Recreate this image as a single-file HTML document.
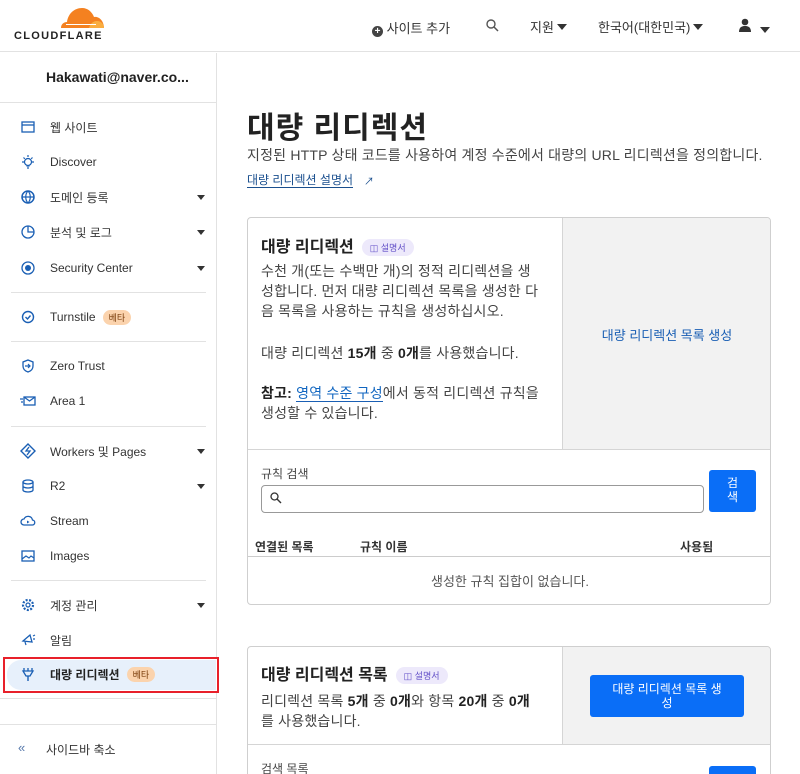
<!DOCTYPE html>
<html><head><meta charset="utf-8"><style>
*{margin:0;padding:0;box-sizing:border-box}
html,body{width:800px;height:774px;overflow:hidden}
body{background:#fff;font-family:"Liberation Sans","Noto Sans CJK KR",sans-serif;color:#222;position:relative}
.a{position:absolute;white-space:nowrap}
.hd{position:absolute;left:0;top:0;width:800px;height:52px;border-bottom:1px solid #e2e2e2}
.sb{position:absolute;left:0;top:53px;width:217px;height:721px;border-right:1px solid #e2e2e2}
.it{position:absolute;left:20px;font-size:12px;color:#333;display:flex;align-items:center;height:20px}
.it svg{width:16px;height:16px;margin-right:14px;flex:none}
.car{position:absolute;left:197px;width:0;height:0;border-left:4px solid transparent;border-right:4px solid transparent;border-top:5px solid #333}
.hc{display:inline-block;width:0;height:0;border-left:5px solid transparent;border-right:5px solid transparent;border-top:6px solid #333;vertical-align:2px;margin-left:3px}
.dv{position:absolute;left:11px;width:195px;height:1px;background:#e2e2e2}
.beta{display:inline-block;background:#fbd3ad;color:#7a3d0b;font-size:9px;border-radius:8px;padding:1px 6px;margin-left:7px}
.card{position:absolute;left:247px;width:524px;border:1px solid #cfcfcf;border-radius:4px;overflow:hidden}
.gray{position:absolute;background:#f2f2f2;border-left:1px solid #d5d5d5}
.doc{display:inline-block;background:#ede9fb;color:#6350c8;font-size:9px;border-radius:9px;padding:2px 8px;margin-left:8px;vertical-align:middle;font-weight:normal}
.p{font-size:14px;color:#444;line-height:20px;letter-spacing:0.2px}
a{color:#1166c0;text-decoration:none}
</style></head><body>
<div class="hd">
<svg class="a" style="left:57px;top:5px" width="48" height="24" viewBox="0 0 48 24"><path d="M4 23c0-4 3-6 6-6 1-8 7-14 15-14 6 0 10 4 12 9 5-1 10 4 10 11z" fill="#f48120"/><path d="M32 23c1-4 4-7 8-7 4 0 7 3 7 7z" fill="#faad3f"/><path d="M9 19.5h30" stroke="#fff" stroke-width="1"/></svg>
<div class="a" style="left:14px;top:30px;font-size:11px;font-weight:bold;letter-spacing:1.3px;color:#222">CLOUDFLARE</div>
<div class="a" style="left:372px;top:18px;font-size:13px;color:#333"><span style="display:inline-block;width:11px;height:11px;border-radius:50%;background:#444;color:#fff;font-size:10px;line-height:11px;text-align:center;vertical-align:-1px;font-weight:bold">+</span> 사이트 추가</div>
<svg class="a" style="left:486px;top:19px" width="13" height="13" viewBox="0 0 13 13"><circle cx="5" cy="5" r="4" fill="none" stroke="#555" stroke-width="1.4"/><path d="M8 8l4 4" stroke="#555" stroke-width="1.5"/></svg>
<div class="a" style="left:530px;top:17px;font-size:13px;color:#333">지원<span class="hc"></span></div>
<div class="a" style="left:598px;top:17px;font-size:13px;color:#333">한국어(대한민국)<span class="hc"></span></div>
<svg class="a" style="left:738px;top:18px" width="14" height="14" viewBox="0 0 14 14"><circle cx="7" cy="4" r="3.3" fill="#333"/><path d="M1 14c0-5 3-6 6-6s6 1 6 6z" fill="#333"/></svg>
<div class="a" style="left:760px;top:22px"><span class="hc" style="margin:0"></span></div>
</div>
<div class="sb">
<div class="a" style="left:46px;top:16px;font-size:14px;font-weight:bold;color:#222">Hakawati@naver.co...</div>
<div class="a" style="left:0;top:49px;width:216px;height:1px;background:#e2e2e2"></div>
</div>
<div class="it" style="top:117px"><svg viewBox="0 0 16 16"><rect x="2" y="3" width="12" height="10" fill="none" stroke="#1a5fb4" stroke-width="1.3"/><path d="M2 6h12" stroke="#1a5fb4" stroke-width="1.3"/></svg>웹 사이트</div>
<div class="it" style="top:152px"><svg viewBox="0 0 16 16"><circle cx="8" cy="8" r="3.5" fill="none" stroke="#1a5fb4" stroke-width="1.2"/><path d="M8 1v2M2 8h2M12 8h2M3.5 3.5l1.3 1.3M12.5 3.5l-1.3 1.3M6.5 12h3M7 14h2" stroke="#1a5fb4" stroke-width="1.2"/></svg>Discover</div>
<div class="it" style="top:187px"><svg viewBox="0 0 16 16"><circle cx="8" cy="8" r="6" fill="none" stroke="#1a5fb4" stroke-width="1.5"/><path d="M2 8h12M8 2c-3 3-3 9 0 12M8 2c3 3 3 9 0 12" stroke="#1a5fb4" stroke-width="1.2" fill="none"/></svg>도메인 등록</div><div class="car" style="top:195px"></div>
<div class="it" style="top:222px"><svg viewBox="0 0 16 16"><circle cx="8" cy="8" r="6" fill="none" stroke="#1a5fb4" stroke-width="1.3"/><path d="M8 2v6h6" fill="none" stroke="#1a5fb4" stroke-width="1.3"/></svg>분석 및 로그</div><div class="car" style="top:230px"></div>
<div class="it" style="top:258px"><svg viewBox="0 0 16 16"><circle cx="8" cy="8" r="6" fill="none" stroke="#1a5fb4" stroke-width="1.3"/><circle cx="8" cy="8" r="3" fill="#1a5fb4"/></svg>Security Center</div><div class="car" style="top:266px"></div>
<div class="dv" style="top:292px"></div>
<div class="it" style="top:307px"><svg viewBox="0 0 16 16"><circle cx="8" cy="8" r="5.5" fill="none" stroke="#1a5fb4" stroke-width="1.4"/><path d="M5.5 8l2 2 3-3.5" fill="none" stroke="#1a5fb4" stroke-width="1.4"/></svg>Turnstile<span class="beta">베타</span></div>
<div class="dv" style="top:341px"></div>
<div class="it" style="top:356px"><svg viewBox="0 0 16 16"><path d="M8 2l5 2v4c0 3-2 5-5 6-3-1-5-3-5-6V4z" fill="none" stroke="#1a5fb4" stroke-width="1.3"/><path d="M5 8h5M8 6l2 2-2 2" fill="none" stroke="#1a5fb4" stroke-width="1.2"/></svg>Zero Trust</div>
<div class="it" style="top:391px"><svg viewBox="0 0 16 16"><rect x="4" y="4" width="11" height="8" fill="none" stroke="#1a5fb4" stroke-width="1.3"/><path d="M4 4l5.5 4 5.5-4M0 6h3M1 9h2" fill="none" stroke="#1a5fb4" stroke-width="1.2"/></svg>Area 1</div>
<div class="dv" style="top:426px"></div>
<div class="it" style="top:441px"><svg viewBox="0 0 16 16"><path d="M8 1l7 7-7 7-7-7z" fill="none" stroke="#1a5fb4" stroke-width="1.4"/><path d="M9 4l-3 4h4l-3 4" fill="none" stroke="#1a5fb4" stroke-width="1.3"/></svg>Workers 및 Pages</div><div class="car" style="top:449px"></div>
<div class="it" style="top:476px"><svg viewBox="0 0 16 16"><ellipse cx="8" cy="4" rx="5" ry="2" fill="none" stroke="#1a5fb4" stroke-width="1.3"/><path d="M3 4v8c0 1 2 2 5 2s5-1 5-2V4M3 8c0 1 2 2 5 2s5-1 5-2" fill="none" stroke="#1a5fb4" stroke-width="1.3"/></svg>R2</div><div class="car" style="top:484px"></div>
<div class="it" style="top:511px"><svg viewBox="0 0 16 16"><path d="M4 12a3 3 0 010-6 4.5 4.5 0 018.5 1A2.5 2.5 0 0112 12z" fill="none" stroke="#1a5fb4" stroke-width="1.3"/><path d="M7 7.5v3l2.5-1.5z" fill="#1a5fb4"/></svg>Stream</div>
<div class="it" style="top:546px"><svg viewBox="0 0 16 16"><rect x="2" y="3" width="12" height="10" fill="none" stroke="#1a5fb4" stroke-width="1.3"/><path d="M2 11l4-3 3 2 2-2 3 2" fill="none" stroke="#1a5fb4" stroke-width="1.2"/></svg>Images</div>
<div class="dv" style="top:580px"></div>
<div class="it" style="top:595px"><svg viewBox="0 0 16 16"><circle cx="8" cy="8" r="5" fill="none" stroke="#1a5fb4" stroke-width="2.2" stroke-dasharray="2 1.5"/><circle cx="8" cy="8" r="2" fill="none" stroke="#1a5fb4" stroke-width="1.2"/></svg>계정 관리</div><div class="car" style="top:603px"></div>
<div class="it" style="top:630px"><svg viewBox="0 0 16 16"><path d="M3 9l7-6 2 7z" fill="none" stroke="#1a5fb4" stroke-width="1.3"/><path d="M5 10l1 3M13 4l2-1M13 7h2" stroke="#1a5fb4" stroke-width="1.2"/></svg>알림</div>
<div class="a" style="left:3px;top:657px;width:216px;height:36px;border:2px solid #e8202a;background:#fff"><div style="position:absolute;left:2px;top:1px;right:1px;bottom:1px;background:#e7f0fb;border-radius:14px 0 0 14px"></div></div>
<div class="it" style="top:664px;font-weight:bold;color:#222"><svg viewBox="0 0 16 16"><path d="M4 2v3M8 2v3M12 2v3M3 5h10l-3 5H6z" fill="none" stroke="#1a5fb4" stroke-width="1.3"/><path d="M8 10v5" stroke="#1a5fb4" stroke-width="1.4"/></svg>대량 리디렉션<span class="beta" style="font-weight:normal">베타</span></div>
<div class="a" style="left:0;top:698px;width:216px;height:1px;background:#e2e2e2"></div>
<div class="a" style="left:0;top:724px;width:216px;height:1px;background:#e2e2e2"></div>
<div class="a" style="left:18px;top:740px;font-size:13px;color:#5577aa">«</div>
<div class="a" style="left:46px;top:741px;font-size:12px;color:#333">사이드바 축소</div>

<div class="a" style="left:247px;top:103px;font-size:30px;font-weight:bold;color:#222;letter-spacing:1px">대량 리디렉션</div>
<div class="a" style="left:247px;top:145px;font-size:14px;color:#444;letter-spacing:0.2px">지정된 HTTP 상태 코드를 사용하여 계정 수준에서 대량의 URL 리디렉션을 정의합니다.</div>
<div class="a" style="left:247px;top:173px;font-size:12px;color:#1a4f8e;border-bottom:1px solid #1a4f8e;line-height:14px">대량 리디렉션 설명서</div>
<div class="a" style="left:364px;top:173px;font-size:10px;color:#1a4f8e">↗</div>

<div class="card" style="top:217px;height:388px">
<div class="gray" style="left:314px;top:0;width:210px;height:232px"></div>
<div class="a" style="left:314px;top:0;width:210px;height:232px;display:flex;align-items:center;justify-content:center;font-size:13px;color:#1a5fb4">대량 리디렉션 목록 생성</div>
<div class="a" style="left:13px;top:15px;font-size:16px;font-weight:bold">대량 리디렉션<span class="doc">◫ 설명서</span></div>
<div class="a p" style="left:13px;top:43px">수천 개(또는 수백만 개)의 정적 리디렉션을 생<br>성합니다. 먼저 대량 리디렉션 목록을 생성한 다<br>음 목록을 사용하는 규칙을 생성하십시오.</div>
<div class="a p" style="left:13px;top:125px">대량 리디렉션 <b style="color:#222">15개</b> 중 <b style="color:#222">0개</b>를 사용했습니다.</div>
<div class="a p" style="left:13px;top:165px"><b style="color:#222">참고:</b> <a style="border-bottom:1px solid #1a5fb4">영역 수준 구성</a>에서 동적 리디렉션 규칙을<br>생성할 수 있습니다.</div>
<div class="a" style="left:0;top:231px;width:524px;height:1px;background:#d5d5d5"></div>
<div class="a" style="left:13px;top:247px;font-size:12px;color:#444">규칙 검색</div>
<div class="a" style="left:13px;top:267px;width:443px;height:28px;border:1px solid #999;border-radius:4px"></div>
<svg class="a" style="left:22px;top:274px" width="12" height="12" viewBox="0 0 12 12"><circle cx="4.5" cy="4.5" r="3.5" fill="none" stroke="#333" stroke-width="1.3"/><path d="M7 7l4 4" stroke="#333" stroke-width="1.4"/></svg>
<div class="a" style="left:461px;top:252px;width:47px;height:42px;background:#0a6ef7;border-radius:3px;color:#fff;font-size:12px;text-align:center;line-height:14px;padding-top:6px;white-space:normal">검<br>색</div>
<div class="a" style="left:7px;top:320px;font-size:12px;font-weight:bold;color:#333">연결된 목록</div>
<div class="a" style="left:112px;top:320px;font-size:12px;font-weight:bold;color:#333">규칙 이름</div>
<div class="a" style="left:432px;top:320px;font-size:12px;font-weight:bold;color:#333">사용됨</div>
<div class="a" style="left:0;top:338px;width:524px;height:1px;background:#ccc"></div>
<div class="a" style="left:0;top:353px;width:524px;text-align:center;font-size:13px;color:#555">생성한 규칙 집합이 없습니다.</div>
</div>

<div class="card" style="top:646px;height:140px">
<div class="gray" style="left:314px;top:0;width:210px;height:98px"></div>
<div class="a" style="left:342px;top:28px;width:154px;height:42px;background:#0a6ef7;border-radius:3px;color:#fff;font-size:12px;text-align:center;line-height:14px;padding-top:7px;white-space:normal">대량 리디렉션 목록 생<br>성</div>
<div class="a" style="left:13px;top:14px;font-size:16px;font-weight:bold">대량 리디렉션 목록<span class="doc">◫ 설명서</span></div>
<div class="a p" style="left:13px;top:44px">리디렉션 목록 <b style="color:#222">5개</b> 중 <b style="color:#222">0개</b>와 항목 <b style="color:#222">20개</b> 중 <b style="color:#222">0개</b><br>를 사용했습니다.</div>
<div class="a" style="left:0;top:97px;width:524px;height:1px;background:#d5d5d5"></div>
<div class="a" style="left:13px;top:113px;font-size:12px;color:#444">검색 목록</div>
<div class="a" style="left:461px;top:119px;width:47px;height:42px;background:#0a6ef7;border-radius:3px"></div>
</div>
</body></html>
